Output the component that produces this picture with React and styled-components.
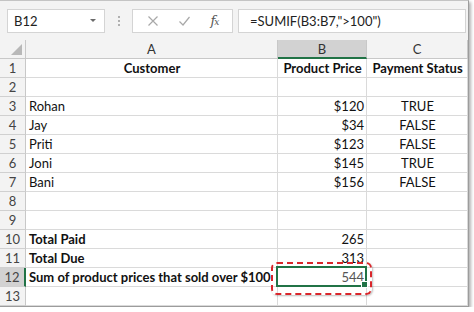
import React from "react";
import styled, { createGlobalStyle } from "styled-components";

const GlobalStyle = createGlobalStyle`
  html, body {
    margin: 0;
    padding: 0;
    background: #ffffff;
  }
  body {
    font-family: Lato, "Open Sans", "Liberation Sans", sans-serif;
  }
`;

const Window = styled.div`
  width: 468px;
  height: 305px;
  background: #f3f3f3;
  border-top: 1px solid #c4c4c4;
  border-right: 1px solid #9c9c9c;
  border-bottom: 1px solid #9c9c9c;
  box-shadow: 2px 2px 3px rgba(0, 0, 0, 0.3);
  display: flex;
  flex-direction: column;
  overflow: hidden;
`;

const FormulaBar = styled.div`
  height: 39px;
  display: flex;
  align-items: center;
  padding: 0 2px 0 7px;
  box-sizing: border-box;
`;

const Box = styled.div`
  height: 24px;
  box-sizing: border-box;
  background: #ffffff;
  border: 1px solid #d4d4d4;
  display: flex;
  align-items: center;
  font-size: 13px;
  color: #222;
`;

const NameBox = styled(Box)`
  width: 98px;
  padding: 0 8px 0 6px;
  justify-content: space-between;
`;

const Caret = styled.span`
  width: 0;
  height: 0;
  border-left: 3px solid transparent;
  border-right: 3px solid transparent;
  border-top: 3px solid #6a6a6a;
`;

const Grip = styled.div`
  width: 27px;
  display: flex;
  flex-direction: column;
  align-items: center;
  gap: 2px;
  span {
    width: 2px;
    height: 2px;
    background: #b0b0b0;
  }
`;

const ButtonsBox = styled(Box)`
  width: 101px;
  justify-content: space-around;
  padding: 0 4px;
`;

const FxLabel = styled.span`
  font-family: "DejaVu Serif", "Liberation Serif", serif;
  font-style: italic;
  font-size: 13px;
  color: #555;
  letter-spacing: -1px;
  small {
    font-size: 9px;
  }
`;

const FormulaInput = styled(Box)`
  flex: 1;
  margin-left: 5px;
  padding-left: 11px;
`;

const Grid = styled.div`
  display: grid;
  grid-template-columns: 26px 252px 89px 1fr;
  grid-auto-rows: 19px;
  background: #ffffff;
  flex: 1;
`;

const Corner = styled.div`
  background: #f3f3f3;
  border-right: 1px solid #c8c8c8;
  border-bottom: 1px solid #c8c8c8;
  position: relative;
  &::after {
    content: "";
    position: absolute;
    right: 3px;
    bottom: 3px;
    width: 0;
    height: 0;
    border-left: 11px solid transparent;
    border-bottom: 11px solid #b8b8b8;
  }
`;

const ColHead = styled.div`
  background: ${(p) => (p.$active ? "#d2d2d2" : "#f3f3f3")};
  border-right: 1px solid #c8c8c8;
  border-bottom: ${(p) => (p.$active ? "2px solid #217346" : "1px solid #c8c8c8")};
  display: flex;
  align-items: center;
  justify-content: center;
  font-size: 13px;
  color: #333;
`;

const RowHead = styled.div`
  background: ${(p) => (p.$active ? "#d2d2d2" : "#f3f3f3")};
  border-right: ${(p) => (p.$active ? "2px solid #217346" : "1px solid #c8c8c8")};
  border-bottom: 1px solid #d0d0d0;
  display: flex;
  align-items: center;
  justify-content: center;
  font-size: 13px;
  color: #444;
`;

const Cell = styled.div`
  position: relative;
  z-index: ${(p) => (p.$selected ? 2 : 0)};
  border-right: 1px solid #dadada;
  border-bottom: 1px solid #dadada;
  display: flex;
  align-items: center;
  justify-content: ${(p) =>
    p.$align === "right" ? "flex-end" : p.$align === "center" ? "center" : "flex-start"};
  padding: 0 2px 0 3px;
  font-size: 13px;
  font-weight: ${(p) => (p.$bold ? 700 : 400)};
  color: ${(p) => (p.$selected ? "#555" : "#111")};
  white-space: nowrap;
`;

const Selection = styled.div`
  position: absolute;
  inset: -2px -1px -1px -2px;
  border: 2px solid #217346;
  pointer-events: none;
  &::after {
    content: "";
    position: absolute;
    right: -3px;
    bottom: -3px;
    width: 5px;
    height: 5px;
    background: #217346;
    border: 1px solid #ffffff;
  }
`;

const Highlight = styled.div`
  position: absolute;
  inset: -6px -6px -9px -7px;
  border: 2px dashed #d9262b;
  border-radius: 6px;
  box-shadow: 1px 1px 2px rgba(0, 0, 0, 0.25);
  pointer-events: none;
`;

const rows = [
  [{ v: "Customer", a: "center", b: true }, { v: "Product Price", a: "center", b: true }, { v: "Payment Status", a: "center", b: true }],
  [{}, {}, {}],
  [{ v: "Rohan" }, { v: "$120", a: "right" }, { v: "TRUE", a: "center" }],
  [{ v: "Jay" }, { v: "$34", a: "right" }, { v: "FALSE", a: "center" }],
  [{ v: "Priti" }, { v: "$123", a: "right" }, { v: "FALSE", a: "center" }],
  [{ v: "Joni" }, { v: "$145", a: "right" }, { v: "TRUE", a: "center" }],
  [{ v: "Bani" }, { v: "$156", a: "right" }, { v: "FALSE", a: "center" }],
  [{}, {}, {}],
  [{}, {}, {}],
  [{ v: "Total Paid", b: true }, { v: "265", a: "right" }, {}],
  [{ v: "Total Due", b: true }, { v: "313", a: "right" }, {}],
  [{ v: "Sum of product prices that sold over $100", b: true }, { v: "544", a: "right", sel: true }, {}],
  [{}, {}, {}],
];

const CrossIcon = () => (
  <svg width="12" height="12" viewBox="0 0 12 12">
    <path d="M1.5 1.5 L10.5 10.5 M10.5 1.5 L1.5 10.5" stroke="#a8a8a8" strokeWidth="1.2" fill="none" />
  </svg>
);

const CheckIcon = () => (
  <svg width="13" height="12" viewBox="0 0 13 12">
    <path d="M1.5 6.5 L5 10 L11.5 2" stroke="#a8a8a8" strokeWidth="1.2" fill="none" />
  </svg>
);

const App = () => (
  <>
    <GlobalStyle />
    <Window>
      <FormulaBar>
        <NameBox>
          <span>B12</span>
          <Caret />
        </NameBox>
        <Grip>
          <span />
          <span />
          <span />
        </Grip>
        <ButtonsBox>
          <CrossIcon />
          <CheckIcon />
          <FxLabel>
            f<small>x</small>
          </FxLabel>
        </ButtonsBox>
        <FormulaInput>=SUMIF(B3:B7,"&gt;100")</FormulaInput>
      </FormulaBar>
      <Grid>
        <Corner />
        <ColHead>A</ColHead>
        <ColHead $active>B</ColHead>
        <ColHead>C</ColHead>
        {rows.map((row, i) => (
          <React.Fragment key={i}>
            <RowHead $active={i === 11}>{i + 1}</RowHead>
            {row.map((c, j) => (
              <Cell key={j} $align={c.a} $bold={c.b} $selected={c.sel}>
                {c.v}
                {c.sel && <Selection />}
                {c.sel && <Highlight />}
              </Cell>
            ))}
          </React.Fragment>
        ))}
      </Grid>
    </Window>
  </>
);

export default App;
